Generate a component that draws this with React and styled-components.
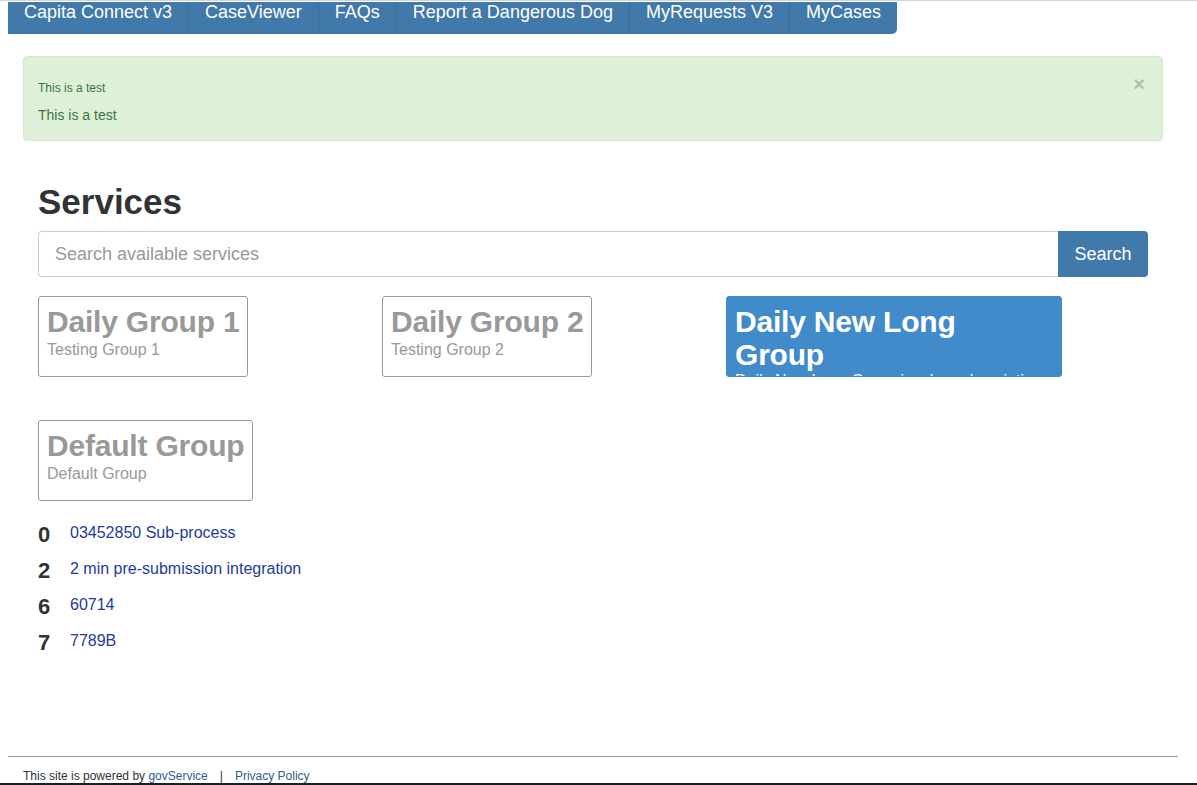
import React from "react"
import styled, { createGlobalStyle } from "styled-components"

const GlobalStyle = createGlobalStyle`
  html, body {
    margin: 0;
    padding: 0;
    background: #fff;
    font-family: "Liberation Sans", Arial, Helvetica, sans-serif;
    color: #333;
  }
  * { box-sizing: border-box; }
`

const navLinks = ["Capita Connect v3", "CaseViewer", "FAQs", "Report a Dangerous Dog", "MyRequests V3", "MyCases"]

const groups = [
  { title: "Daily Group 1", text: "Testing Group 1" },
  { title: "Daily Group 2", text: "Testing Group 2" },
  { title: "Daily New Long Group", text: "Daily New Long Group is a long description to test the wrapping", active: true },
  { title: "Default Group", text: "Default Group" },
]

const processes = [
  { num: "0", name: "03452850 Sub-process" },
  { num: "2", name: "2 min pre-submission integration" },
  { num: "6", name: "60714" },
  { num: "7", name: "7789B" },
]

const Page = styled.div`
  height: 785px;
  overflow: hidden;
  display: flex;
  flex-direction: column;
  border-top: 1px solid #d4d4d4;
  border-bottom: 2px solid #1e1e1e;
`

const Nav = styled.nav`
  display: inline-flex;
  align-self: flex-start;
  margin: 1px 0 0 8px;
  background: #4279ab;
  border-bottom-right-radius: 5px;
`

const NavItem = styled.a`
  display: block;
  padding: 0 16px 12px;
  font-size: 18px;
  line-height: 20px;
  color: #fff;
  text-decoration: none;
  border-right: 1px solid #3b6d9b;
  &:last-child { border-right: none; }
`

const Container = styled.div`
  width: 1140px;
  margin: 22px 0 0 23px;
`

const Alert = styled.div`
  display: flex;
  justify-content: space-between;
  padding: 15px 15px 15px 14px;
  background: #dff0d8;
  border: 1px solid #d6e9c6;
  border-radius: 4px;
  color: #3c763d;
`

const AlertTitle = styled.div`
  margin-top: 8px;
  font-size: 12px;
  line-height: 17px;
`

const AlertBody = styled.div`
  margin-top: 8px;
  font-size: 14px;
  line-height: 20px;
`

const Close = styled.button`
  align-self: flex-start;
  margin: 2px 2px 0 0;
  padding: 0;
  border: none;
  background: none;
  font-family: "Liberation Sans", Arial, sans-serif;
  font-size: 20px;
  font-weight: 700;
  line-height: 20px;
  color: #000;
  opacity: 0.2;
`

const Main = styled.main`
  padding: 0 15px;
`

const Heading = styled.h1`
  margin: 41px 0 9px;
  font-size: 35px;
  font-weight: 700;
  line-height: 40px;
  color: #333;
`

const SearchRow = styled.form`
  display: flex;
  height: 46px;
`

const SearchInput = styled.input`
  flex: 1;
  height: 100%;
  padding: 0 16px;
  font-family: inherit;
  font-size: 18px;
  color: #555;
  border: 1px solid #ccc;
  border-right: none;
  border-radius: 4px 0 0 4px;
  outline: none;
  &::placeholder { color: #999; }
`

const SearchButton = styled.button`
  width: 90px;
  height: 100%;
  font-family: inherit;
  font-size: 18px;
  color: #fff;
  background: #4279ab;
  border: none;
  border-radius: 0 4px 4px 0;
`

const TileGrid = styled.div`
  display: grid;
  grid-template-columns: repeat(3, 336px);
  column-gap: 8px;
  row-gap: 43px;
  margin-top: 19px;
`

const Tile = styled.a`
  justify-self: ${p => (p.$active ? "stretch" : "start")};
  height: 81px;
  overflow: hidden;
  padding: 8px 8px 0;
  border: 1px solid ${p => (p.$active ? "#428bca" : "#9a9a9a")};
  border-radius: 3px;
  background: ${p => (p.$active ? "#428bca" : "#fff")};
  color: ${p => (p.$active ? "#fff" : "#999")};
  text-decoration: none;
`

const TileTitle = styled.div`
  font-size: 30px;
  font-weight: 700;
  line-height: 33px;
  letter-spacing: -0.2px;
  white-space: ${p => (p.$wrap ? "normal" : "nowrap")};
  max-width: ${p => (p.$wrap ? "240px" : "none")};
`

const TileText = styled.div`
  margin-top: ${p => (p.$tight ? "0" : "2px")};
  font-size: 16px;
  line-height: 20px;
  white-space: ${p => (p.$tight ? "normal" : "nowrap")};
`

const ProcessList = styled.ul`
  list-style: none;
  margin: 21px 0 0;
  padding: 0;
`

const ProcessRow = styled.li`
  display: flex;
  align-items: flex-start;
  margin-bottom: 10px;
`

const ProcessNum = styled.span`
  width: 32px;
  font-size: 22px;
  font-weight: 700;
  line-height: 26px;
  color: #333;
`

const ProcessLink = styled.a`
  margin-top: 1px;
  font-size: 16px;
  line-height: 20px;
  color: #1f3a9c;
  text-decoration: none;
`

const Footer = styled.footer`
  flex: none;
  height: 27px;
  margin: auto 0 0 8px;
  width: 1170px;
  padding: 12px 15px 0;
  border-top: 1px solid #9a9a9a;
  font-size: 12px;
  line-height: 15px;
  color: #333;
`

const FooterLink = styled.a`
  color: #2a5d91;
  text-decoration: none;
`

const Divider = styled.span`
  margin: 0 12px;
`

const App = () => {
  return (
    <Page>
      <GlobalStyle />
      <Nav>
        {navLinks.map(l => (
          <NavItem key={l} href="#">{l}</NavItem>
        ))}
      </Nav>

      <Container>
        <Alert>
          <div>
            <AlertTitle>This is a test</AlertTitle>
            <AlertBody>This is a test</AlertBody>
          </div>
          <Close type="button">×</Close>
        </Alert>

        <Main>
          <Heading>Services</Heading>
          <SearchRow onSubmit={e => e.preventDefault()}>
            <SearchInput placeholder="Search available services" />
            <SearchButton type="submit">Search</SearchButton>
          </SearchRow>

          <TileGrid>
            {groups.map(g => (
              <Tile key={g.title} href="#" $active={g.active}>
                <TileTitle $wrap={g.active}>{g.title}</TileTitle>
                <TileText $tight={g.active}>{g.text}</TileText>
              </Tile>
            ))}
          </TileGrid>

          <ProcessList>
            {processes.map(p => (
              <ProcessRow key={p.num}>
                <ProcessNum>{p.num}</ProcessNum>
                <ProcessLink href="#">{p.name}</ProcessLink>
              </ProcessRow>
            ))}
          </ProcessList>
        </Main>
      </Container>

      <Footer>
        This site is powered by <FooterLink href="#">govService</FooterLink>
        <Divider>|</Divider>
        <FooterLink href="#">Privacy Policy</FooterLink>
      </Footer>
    </Page>
  )
}

export default App
